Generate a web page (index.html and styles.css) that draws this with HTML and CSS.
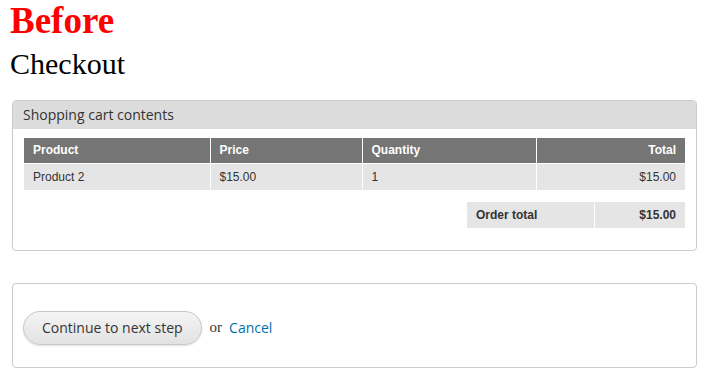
FILE: index.html
```html
<!DOCTYPE html>
<html lang="en">
<head>
    <meta charset="UTF-8">
    <meta name="viewport" content="width=device-width, initial-scale=1.0">
    <title>Checkout</title>
    <link rel="stylesheet" href="styles.css">
</head>
<body>

<h1 class="title">Before</h1>
<h2 class="subtitle">Checkout</h2>

<div class="panel">
    <div class="panel-head">Shopping cart contents</div>
    <div class="panel-body">
        <table class="cart">
            <thead>
                <tr>
                    <th class="col-product">Product</th>
                    <th class="col-price">Price</th>
                    <th class="col-qty">Quantity</th>
                    <th class="num">Total</th>
                </tr>
            </thead>
            <tbody>
                <tr>
                    <td>Product 2</td>
                    <td>$15.00</td>
                    <td>1</td>
                    <td class="num">$15.00</td>
                </tr>
            </tbody>
        </table>

        <table class="summary">
            <tr>
                <td class="label">Order total</td>
                <td class="num">$15.00</td>
            </tr>
        </table>
    </div>
</div>

<div class="panel actions">
    <button type="button" class="btn">Continue to next step</button>
    <span class="or">or</span>
    <a href="#" class="cancel">Cancel</a>
</div>

</body>
</html>
```

FILE: styles.css
```css
body {
    margin: 0;
    padding: 0 11px 0 10px;
    font-family: "Liberation Serif", serif;
    background-color: #fff;
    color: #000;
}
.title {
    margin: 0;
    padding-top: 2px;
    font-size: 37px;
    line-height: 38px;
    color: #f00; /* czerwony naglowek */
}
.subtitle {
    margin: 0;
    padding-top: 6px;
    font-size: 30px;
    font-weight: normal;
    line-height: 36px;
}
.panel {
    margin: 18px 0 0 2px;
    border: 1px solid #ccc;
    border-radius: 4px;
}
.panel-head {
    background-color: #dcdcdc;
    padding: 0 10px;
    height: 28px;
    line-height: 28px;
    font-family: "Open Sans", sans-serif;
    font-size: 14px;
    color: #333;
    border-radius: 3px 3px 0 0;
}
.panel-body {
    padding: 9px 11px 22px 11px;
}
table {
    border-collapse: collapse;
    font-family: "Liberation Sans", Arial, sans-serif;
    font-size: 12px;
}
.cart {
    width: 100%;
    table-layout: fixed;
}
.cart th, .cart td {
    box-sizing: border-box;
    padding: 0 9px;
    text-align: left;
    border-left: 1px solid #fff;
}
.cart th:first-child, .cart td:first-child {
    border-left: none;
}
.cart th {
    background-color: #757575;
    color: #fff;
    height: 25px;
}
.cart th.col-product {
    width: 186px;
}
.cart th.col-price {
    width: 152px;
}
.cart th.col-qty {
    width: 174px;
}
.cart td {
    background-color: #e5e5e5;
    color: #333;
    height: 27px;
    border-top: 1px solid #fff;
}
.cart .num {
    text-align: right;
}
.summary {
    margin: 12px 0 0 auto;
}
.summary td {
    background-color: #e5e5e5;
    color: #333;
    font-weight: bold;
    height: 26px;
    padding: 0 9px;
}
.summary .label {
    width: 109px;
    border-right: 1px solid #fff;
}
.summary .num {
    width: 72px;
    text-align: right;
}
.actions {
    margin-top: 32px;
    height: 79px;
    display: flex;
    align-items: center;
    padding: 4px 10px 0 10px;
}
.btn {
    font-family: "Open Sans", sans-serif;
    font-size: 14px;
    color: #333;
    height: 34px;
    padding: 0 18px;
    border: 1px solid #c8c8c8;
    border-radius: 17px;
    background: linear-gradient(#f4f4f4, #e2e2e2);
    box-shadow: 0 1px 2px rgba(0, 0, 0, 0.12);
    cursor: pointer;
}
.or {
    margin-left: 8px;
    font-size: 15px;
    color: #333;
}
.cancel {
    margin-left: 7px;
    font-family: "Open Sans", sans-serif;
    font-size: 14px;
    color: #0071b3;
    text-decoration: none;
}
```
